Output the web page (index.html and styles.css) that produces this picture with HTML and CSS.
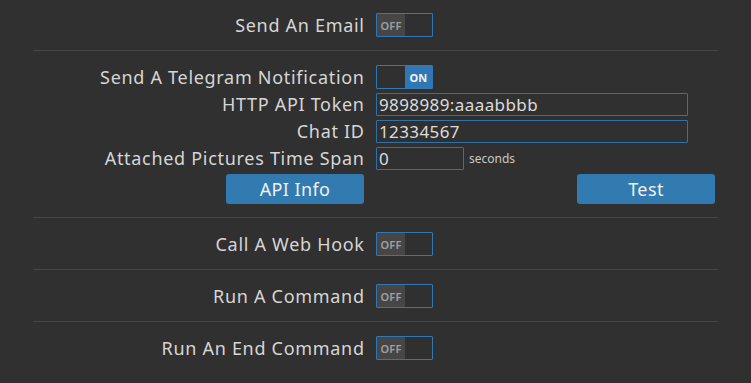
FILE: index.html
```html
<!DOCTYPE html>
<html>
<head>
<meta charset="utf-8">
<link rel="stylesheet" href="styles.css">
</head>
<body>
<div class="panel">
  <section class="group first">
    <div class="row">
      <label class="lbl">Send An Email</label>
      <div class="ctl"><span class="toggle off"><span class="seg seg-l">OFF</span><span class="seg seg-r"></span></span></div>
    </div>
  </section>
  <section class="group">
    <div class="row">
      <label class="lbl">Send A Telegram Notification</label>
      <div class="ctl"><span class="toggle on"><span class="seg seg-l"></span><span class="seg seg-r">ON</span></span></div>
    </div>
    <div class="row">
      <label class="lbl">HTTP API Token</label>
      <div class="ctl"><input class="inp wide" type="text" value="9898989:aaaabbbb"></div>
    </div>
    <div class="row">
      <label class="lbl">Chat ID</label>
      <div class="ctl"><input class="inp wide" type="text" value="12334567"></div>
    </div>
    <div class="row">
      <label class="lbl">Attached Pictures Time Span</label>
      <div class="ctl"><input class="inp short" type="text" value="0"><span class="unit">seconds</span></div>
    </div>
    <div class="row btnrow">
      <div class="lbl"><button class="btn">API Info</button></div>
      <div class="ctl end"><button class="btn">Test</button></div>
    </div>
  </section>
  <section class="group">
    <div class="row">
      <label class="lbl">Call A Web Hook</label>
      <div class="ctl"><span class="toggle off"><span class="seg seg-l">OFF</span><span class="seg seg-r"></span></span></div>
    </div>
  </section>
  <section class="group">
    <div class="row">
      <label class="lbl">Run A Command</label>
      <div class="ctl"><span class="toggle off"><span class="seg seg-l">OFF</span><span class="seg seg-r"></span></span></div>
    </div>
  </section>
  <section class="group last">
    <div class="row">
      <label class="lbl">Run An End Command</label>
      <div class="ctl"><span class="toggle off"><span class="seg seg-l">OFF</span><span class="seg seg-r"></span></span></div>
    </div>
  </section>
</div>
</body>
</html>
```
FILE: styles.css
```css
html, body {
  margin: 0;
  padding: 0;
  background: #303030;
  height: 100%;
  overflow: hidden;
}
body {
  font-family: "Noto Sans", "DejaVu Sans", sans-serif;
  color: #d6d6d6;
}
.panel {
  margin: 0 33px;
  width: 685px;
}
.group {
  border-top: 1px solid #454545;
  padding: 14px 0 13px;
  display: flex;
  flex-direction: column;
  gap: 4px;
}
.group.first {
  border-top: none;
  padding: 13px 0 13px;
}
.row {
  display: grid;
  grid-template-columns: 331px 1fr;
  column-gap: 12px;
  align-items: center;
}
.lbl {
  text-align: right;
  font-size: 18px;
  line-height: 23px;
  letter-spacing: 0.7px;
  margin-right: -0.7px;
  white-space: nowrap;
}
.ctl {
  display: flex;
  align-items: center;
}
.ctl.end {
  justify-content: flex-end;
  padding-right: 3px;
}
.toggle {
  display: flex;
  width: 55px;
  height: 22px;
  border: 1px solid #2f78b3;
  border-radius: 1px;
  overflow: hidden;
}
.seg {
  width: 28px;
  display: flex;
  align-items: center;
  justify-content: center;
  font-size: 11px;
  font-weight: 600;
  letter-spacing: 0.2px;
}
.seg-r { width: 27px; }
.toggle.off .seg-l {
  background: #464646;
  color: #a0a0a0;
}
.toggle.on .seg-r {
  background: #2f78b3;
  color: #f2f2f2;
  font-weight: 700;
}
.inp {
  box-sizing: border-box;
  height: 23px;
  background: #303030;
  border: 1px solid #2f72a8;
  border-radius: 1px;
  color: #dcdcdc;
  font-family: "Noto Sans", "DejaVu Sans", sans-serif;
  font-size: 17px;
  letter-spacing: 0.4px;
  padding: 0 2px;
  outline: none;
}
.inp.wide { width: 312px; }
.inp.short { width: 88px; }
.unit {
  margin-left: 5px;
  font-size: 12px;
  color: #c8c8c8;
}
.btnrow .lbl {
  display: flex;
  justify-content: flex-end;
  letter-spacing: 0;
  margin-right: 0;
}
.btn {
  width: 138px;
  height: 30px;
  background: #317bb0;
  border: none;
  border-radius: 3px;
  color: #f0f0f0;
  font-family: "Noto Sans", "DejaVu Sans", sans-serif;
  font-size: 18px;
  letter-spacing: 0.4px;
  padding: 0;
  cursor: pointer;
}
```
